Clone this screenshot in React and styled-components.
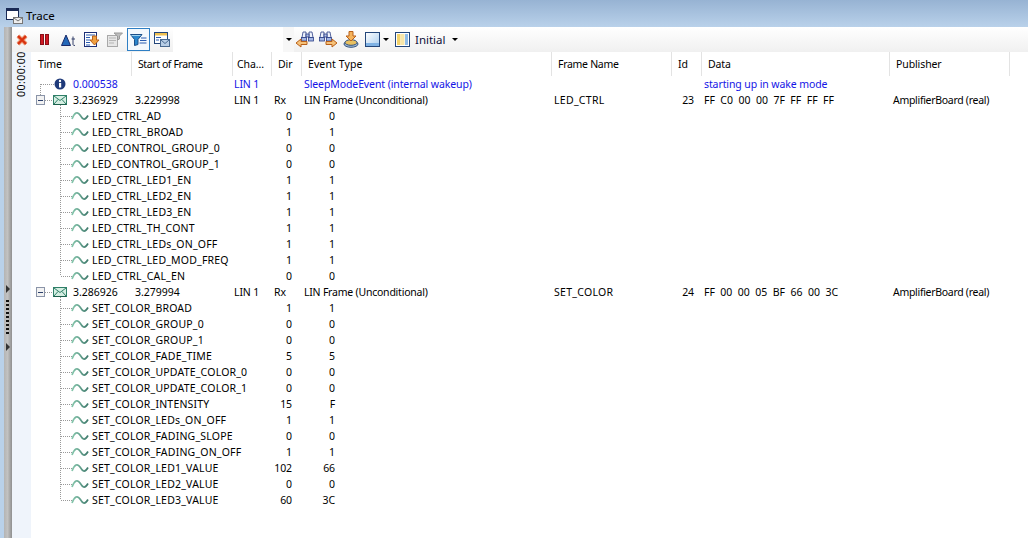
import React from "react";
import styled, { createGlobalStyle } from "styled-components";

const COLUMNS = "100px 101px 39px 30px 250px 120px 30px 188px 120px 1fr";

const GlobalStyle = createGlobalStyle`
    html, body {
        margin: 0;
        height: 100%;
        overflow: hidden;
        background: #fff;
    }
    body {
        font-family: "Noto Sans", "Liberation Sans", sans-serif;
        font-size: 10.5px;
        letter-spacing: -0.1px;
        color: #000;
    }
`;

const Page = styled.div`
    display: flex;
    flex-direction: column;
    width: 1028px;
    height: 538px;
    overflow: hidden;
`;

const TitleBar = styled.div`
    display: flex;
    align-items: center;
    gap: 3px;
    flex: 0 0 27px;
    padding: 3px 0 0 6px;
    box-sizing: border-box;
    background: linear-gradient(#97b3d3, #b9d1ea);
    font-size: 11.5px;
    letter-spacing: 0;
`;

const Body = styled.div`
    display: flex;
    flex: 1;
    min-height: 0;
    background: linear-gradient(90deg, #b9d1ea 0 4px, transparent 4px);
`;

const Splitter = styled.div`
    flex: 0 0 8px;
    margin-left: 4px;
    display: flex;
    flex-direction: column;
    align-items: center;
    padding-top: 258px;
    box-sizing: border-box;
    background: linear-gradient(90deg, #b4b4b4 0, #c2c2c2 45%, #8f8f8f 100%);
`;

const SplitArrow = styled.div`
    width: 0;
    height: 0;
    border-left: 4px solid #333;
    border-top: 4px solid transparent;
    border-bottom: 4px solid transparent;
    margin-left: -1px;
`;

const SplitDots = styled.div`
    width: 3px;
    height: 35px;
    margin: 7px 0 8px -2px;
    background: repeating-linear-gradient(#111 0 2px, transparent 2px 4px);
`;

const Main = styled.div`
    flex: 1;
    display: flex;
    flex-direction: column;
    min-width: 0;
`;

const Toolbar = styled.div`
    display: flex;
    flex: 0 0 25px;
    height: 25px;
    background: linear-gradient(#fff, #f0f0f0);
`;

const ToolGroup = styled.div`
    display: flex;
    align-items: center;
`;

const ToolButton = styled.div`
    display: flex;
    align-items: center;
    justify-content: center;
    box-sizing: border-box;
    width: ${(p) => p.$w || 23}px;
    height: ${(p) => (p.$active ? 23 : 25)}px;
    margin-left: ${(p) => p.$ml || 0}px;
    ${(p) => p.$active && "border: 1px solid #2f7fc4; background: #f4f9fd;"}
`;

const ComboBlank = styled.div`
    flex: 0 0 110px;
    background: #fff;
`;

const ComboArrow = styled.div`
    flex: 0 0 11px;
    display: flex;
    align-items: center;
    justify-content: center;
    background: #f7f7f7;
`;

const Caret = styled.span`
    width: 0;
    height: 0;
    margin-left: ${(p) => p.$ml || 0}px;
    border-top: 3px solid #000;
    border-left: 3px solid transparent;
    border-right: 3px solid transparent;
`;

const ToolLabel = styled.span`
    font-size: 11.5px;
    letter-spacing: 0;
    color: #10103a;
    margin-left: 3px;
`;

const Content = styled.div`
    flex: 1;
    display: flex;
    min-height: 0;
`;

const TimeRuler = styled.div`
    flex: 0 0 19px;
    background: #eff4fb;
    display: flex;
    justify-content: center;
    padding-top: 3px;
`;

const RulerText = styled.span`
    writing-mode: vertical-rl;
    transform: rotate(180deg);
    height: 42px;
    letter-spacing: 0.5px;
    line-height: 19px;
`;

const Table = styled.div`
    flex: 1;
    background: #fff;
    min-width: 0;
`;

const HeaderRow = styled.div`
    display: grid;
    grid-template-columns: ${COLUMNS};
    height: 24px;
`;

const HeaderCell = styled.div`
    box-sizing: border-box;
    padding-left: ${(p) => p.$pl || 6}px;
    padding-top: 4px;
    line-height: 16px;
    white-space: nowrap;
    overflow: hidden;
    letter-spacing: ${(p) => p.$ls ?? -0.1}px;
    &:not(:first-child) {
        border-left: 1px solid #e3e3e3;
    }
`;

const Row = styled.div`
    display: grid;
    grid-template-columns: ${COLUMNS};
    height: 16px;
    line-height: 16px;
    white-space: pre;
    color: ${(p) => (p.$blue ? "#1414e6" : "#000")};
`;

const TreeCell = styled.div`
    display: flex;
    align-items: center;
    letter-spacing: ${(p) => (p.$wide ? "0.2px" : "0")};
    grid-column: ${(p) => (p.$wide ? "1 / 4" : "auto")};
`;

const Gutter = styled.svg`
    flex: none;
    display: block;
`;

const Cell = styled.div`
    padding-left: ${(p) => p.$pl || 3}px;
    white-space: pre;
    overflow: hidden;
    letter-spacing: ${(p) => p.$ls ?? -0.1}px;
`;

const RightCell = styled.div`
    text-align: right;
    padding-right: ${(p) => p.$pr}px;
`;

const ValueCell = styled.div`
    width: 34px;
    text-align: right;
`;

const Dots = ({ d }) => <path d={d} fill="none" stroke="#999" strokeDasharray="1 1" />;

const InfoGutter = () => (
    <Gutter width="42" height="16">
        <Dots d="M9.5 8V16M10 8.5H24" />
        <circle cx="29" cy="8" r="5.5" fill="#1f3a7a" />
        <circle cx="29" cy="5" r="1.2" fill="#fff" />
        <rect x="28" y="7" width="2.2" height="4.5" fill="#fff" />
    </Gutter>
);

const FrameGutter = ({ first }) => (
    <Gutter width="42" height="16">
        {first && <Dots d="M9.5 0V3" />}
        <rect x="5.5" y="3.5" width="8" height="9" fill="#f2f2f2" stroke="#8a94a8" />
        <path d="M7 8.5H12" stroke="#2b3f6b" />
        <Dots d="M14 8.5H21" />
        <rect x="22.5" y="3.5" width="13" height="9" fill="#d5eee2" stroke="#2f7f68" />
        <path d="M23 4L29 8.5 35 4M23 12L27 7.5M35 12L31 7.5" fill="none" stroke="#2f7f68" />
        <path d="M22.5 12.5H35.5" stroke="#1d5f4c" />
        <Dots d="M29.5 13V16" />
    </Gutter>
);

const SignalGutter = ({ last }) => (
    <Gutter width="61" height="16">
        <defs>
            <linearGradient id="waveStroke" gradientUnits="userSpaceOnUse" x1="41" y1="0" x2="57" y2="0">
                <stop offset="0" stopColor="#86c7ad" />
                <stop offset="1" stopColor="#3f7a6c" />
            </linearGradient>
        </defs>
        <Dots d={last ? "M29.5 0V8M30 8.5H41" : "M29.5 0V16M30 8.5H41"} />
        <path d="M41 11C43.5 4.5 46.5 3 49 7S53.5 13.5 57 7.5" fill="none" stroke="url(#waveStroke)" strokeWidth="1.7" />
    </Gutter>
);

const TitleIcon = () => (
    <svg width="17" height="17" viewBox="0 0 17 17">
        <rect x="0.5" y="1.5" width="12" height="11" fill="#fff" stroke="#1a2a55" />
        <rect x="0.5" y="1.5" width="12" height="2.5" fill="#1a2a55" />
        <rect x="7.5" y="10.5" width="9" height="6" fill="#eee" stroke="#777" />
        <path d="M8 11L12 14 16 11" fill="none" stroke="#777" />
    </svg>
);

const CloseIcon = () => (
    <svg width="12" height="12" viewBox="0 0 12 12">
        <path d="M2 2L10 10M10 2L2 10" stroke="#eb8f6a" strokeWidth="4" />
        <path d="M2 2L10 10M10 2L2 10" stroke="#d8300e" strokeWidth="2" />
    </svg>
);

const PauseIcon = () => (
    <svg width="9" height="11" viewBox="0 0 9 11">
        <rect x="0.5" y="0.5" width="3" height="10" fill="#d01a24" stroke="#8a1018" />
        <rect x="5.5" y="0.5" width="3" height="10" fill="#d01a24" stroke="#8a1018" />
    </svg>
);

const DeltaIcon = () => (
    <svg width="15" height="12" viewBox="0 0 15 12">
        <path d="M0.5 11.5L5 1 9.5 11.5Z" fill="#2468b8" stroke="#1a2a6a" />
        <path d="M12 2.5V10.5Q12 11.5 14 11.5M10.5 5H14" fill="none" stroke="#35406a" />
    </svg>
);

const ExportIcon = () => (
    <svg width="16" height="15" viewBox="0 0 16 15">
        <rect x="0.5" y="0.5" width="12" height="14" fill="#fff" stroke="#1c2f78" />
        <path d="M2 3H11M2 5.5H6M2 8H6M2 10.5H6M2 13H6" stroke="#2a5cb0" />
        <path d="M8.5 4H12.5V8H15L10.5 13 6 8H8.5Z" fill="#f0a040" stroke="#b8601a" />
    </svg>
);

const GreyIcon = () => (
    <svg width="16" height="15" viewBox="0 0 16 15">
        <rect x="0.5" y="3.5" width="10" height="11" fill="#e6e6e6" stroke="#a8a8a8" />
        <path d="M2 6H9M2 8.5H9M2 11H7" stroke="#b5b5b5" />
        <path d="M7 1H15.5L12.5 4V7L10.5 8V4Z" fill="#bdbdbd" stroke="#999" />
    </svg>
);

const FilterIcon = () => (
    <svg width="17" height="12" viewBox="0 0 17 12">
        <path d="M0.5 0.5H12L8 5.5V10.5L4.5 11.5V5.5Z" fill="#2a86cc" stroke="#1c4f88" />
        <path d="M1.5 1.5H10.5" stroke="#9fd3f0" />
        <path d="M11 4H16.5M10 6.5H16.5M9.5 9H16.5" stroke="#2a5cb0" />
    </svg>
);

const WindowMailIcon = () => (
    <svg width="16" height="15" viewBox="0 0 16 15">
        <rect x="0.5" y="0.5" width="13" height="11" fill="#fff" stroke="#23467a" />
        <rect x="1" y="1" width="12" height="2.5" fill="#f0c050" />
        <path d="M2 5.5H7M2 8H5" stroke="#2a5cb0" />
        <rect x="6.5" y="7.5" width="9" height="7" fill="#b8cee6" stroke="#4a6a90" />
        <path d="M7 8L11 11.5 15 8" fill="none" stroke="#4a6a90" />
    </svg>
);

const FindIcon = ({ back }) => (
    <svg width="20" height="17" viewBox="0 0 20 17">
        <g transform={back ? "translate(6 0)" : "translate(1 0)"} stroke="#2c3f86" strokeWidth="0.8">
            <path d="M1 6.5L2 1H5V6.5Z" fill="#eef2fb" />
            <path d="M8 6.5V1H11L12 6.5Z" fill="#eef2fb" />
            <rect x="5" y="3" width="3" height="3" fill="#aebde6" />
            <rect x="0.5" y="6.5" width="5" height="3.5" fill="#a3b6e4" />
            <rect x="7.5" y="6.5" width="5" height="3.5" fill="#a3b6e4" />
        </g>
        <path
            d={back ? "M1 12L6 8V10.5H12V13.5H6V16Z" : "M19 12L14 8V10.5H8V13.5H14V16Z"}
            fill="#f6c27a"
            stroke="#b8601a"
        />
    </svg>
);

const SaveIcon = () => (
    <svg width="16" height="17" viewBox="0 0 16 17">
        <ellipse cx="8" cy="13" rx="7" ry="3.3" fill="#9db9d8" stroke="#33527c" />
        <ellipse cx="8" cy="11.5" rx="6" ry="2.8" fill="#e8c060" stroke="#33527c" />
        <path d="M6 0.5H10V5H13L8 10 3 5H6Z" fill="#f6b45c" stroke="#b8601a" />
    </svg>
);

const LayoutIcon = () => (
    <svg width="15" height="15" viewBox="0 0 15 15">
        <defs>
            <linearGradient id="layoutFill" x1="0" y1="0" x2="1" y2="1">
                <stop offset="0" stopColor="#fff" />
                <stop offset="1" stopColor="#a9cdee" />
            </linearGradient>
        </defs>
        <rect x="0.5" y="0.5" width="14" height="14" fill="url(#layoutFill)" stroke="#23467a" />
        <rect x="1" y="11" width="13" height="3" fill="#7fb2e4" />
    </svg>
);

const ColumnsIcon = () => (
    <svg width="15" height="15" viewBox="0 0 15 15">
        <rect x="0.5" y="0.5" width="14" height="14" fill="#fff" stroke="#23467a" />
        <rect x="2" y="2" width="3.5" height="11" fill="#f3d36b" />
        <rect x="6" y="2" width="3.5" height="11" fill="#f8e6a8" />
        <rect x="10" y="2" width="3" height="11" fill="#8dbbe8" />
    </svg>
);

const signals1 = [
    ["LED_CTRL_AD", "0", "0"],
    ["LED_CTRL_BROAD", "1", "1"],
    ["LED_CONTROL_GROUP_0", "0", "0"],
    ["LED_CONTROL_GROUP_1", "0", "0"],
    ["LED_CTRL_LED1_EN", "1", "1"],
    ["LED_CTRL_LED2_EN", "1", "1"],
    ["LED_CTRL_LED3_EN", "1", "1"],
    ["LED_CTRL_TH_CONT", "1", "1"],
    ["LED_CTRL_LEDs_ON_OFF", "1", "1"],
    ["LED_CTRL_LED_MOD_FREQ", "1", "1"],
    ["LED_CTRL_CAL_EN", "0", "0"],
];

const signals2 = [
    ["SET_COLOR_BROAD", "1", "1"],
    ["SET_COLOR_GROUP_0", "0", "0"],
    ["SET_COLOR_GROUP_1", "0", "0"],
    ["SET_COLOR_FADE_TIME", "5", "5"],
    ["SET_COLOR_UPDATE_COLOR_0", "0", "0"],
    ["SET_COLOR_UPDATE_COLOR_1", "0", "0"],
    ["SET_COLOR_INTENSITY", "15", "F"],
    ["SET_COLOR_LEDs_ON_OFF", "1", "1"],
    ["SET_COLOR_FADING_SLOPE", "0", "0"],
    ["SET_COLOR_FADING_ON_OFF", "1", "1"],
    ["SET_COLOR_LED1_VALUE", "102", "66"],
    ["SET_COLOR_LED2_VALUE", "0", "0"],
    ["SET_COLOR_LED3_VALUE", "60", "3C"],
];

const headers = [
    ["Time", 7],
    ["Start of Frame", 6, -0.4],
    ["Cha...", 4],
    ["Dir", 6],
    ["Event Type", 6, 0.1],
    ["Frame Name", 6, -0.3],
    ["Id", 6],
    ["Data", 6],
    ["Publisher", 6],
];

function FrameRow({ first, time, start, name, id, data }) {
    return (
        <Row>
            <TreeCell>
                <FrameGutter first={first} />
                {time}
            </TreeCell>
            <Cell $pl={4} $ls={0}>{start}</Cell>
            <Cell $pl={2}>LIN 1</Cell>
            <Cell>Rx</Cell>
            <Cell $ls={-0.22}>LIN Frame (Unconditional)</Cell>
            <Cell $ls={0.3}>{name}</Cell>
            <RightCell $pr={7}>{id}</RightCell>
            <Cell $ls={0}>{data}</Cell>
            <Cell $pl={4} $ls={-0.3}>AmplifierBoard (real)</Cell>
        </Row>
    );
}

function SignalRows({ items }) {
    return items.map(([name, raw, value], i) => (
        <Row key={name}>
            <TreeCell $wide>
                <SignalGutter last={i === items.length - 1} />
                {name}
            </TreeCell>
            <RightCell $pr={9}>{raw}</RightCell>
            <ValueCell>{value}</ValueCell>
        </Row>
    ));
}

export default function App() {
    return (
        <Page>
            <GlobalStyle />
            <TitleBar>
                <TitleIcon />
                Trace
            </TitleBar>
            <Body>
                <Splitter>
                    <SplitArrow />
                    <SplitDots />
                    <SplitArrow />
                </Splitter>
                <Main>
                    <Toolbar>
                        <ToolGroup>
                            <ToolButton $w={20}><CloseIcon /></ToolButton>
                            <ToolButton $w={25}><PauseIcon /></ToolButton>
                            <ToolButton><DeltaIcon /></ToolButton>
                            <ToolButton><ExportIcon /></ToolButton>
                            <ToolButton><GreyIcon /></ToolButton>
                            <ToolButton $active $ml={1}><FilterIcon /></ToolButton>
                            <ToolButton><WindowMailIcon /></ToolButton>
                        </ToolGroup>
                        <ComboBlank />
                        <ComboArrow><Caret /></ComboArrow>
                        <ToolGroup>
                            <ToolButton $w={22}><FindIcon back /></ToolButton>
                            <ToolButton $w={24}><FindIcon /></ToolButton>
                            <ToolButton $w={22}><SaveIcon /></ToolButton>
                            <ToolButton $w={20}><LayoutIcon /></ToolButton>
                            <Caret $ml={1} />
                            <ToolButton $w={20} $ml={3}><ColumnsIcon /></ToolButton>
                            <ToolLabel>Initial</ToolLabel>
                            <Caret $ml={6} />
                        </ToolGroup>
                    </Toolbar>
                    <Content>
                        <TimeRuler>
                            <RulerText>00:00:00</RulerText>
                        </TimeRuler>
                        <Table>
                            <HeaderRow>
                                {headers.map(([label, pad, ls]) => (
                                    <HeaderCell key={label} $pl={pad} $ls={ls}>{label}</HeaderCell>
                                ))}
                                <HeaderCell />
                            </HeaderRow>
                            <Row $blue>
                                <TreeCell>
                                    <InfoGutter />
                                    0.000538
                                </TreeCell>
                                <Cell />
                                <Cell $pl={2}>LIN 1</Cell>
                                <Cell />
                                <Cell>SleepModeEvent (internal wakeup)</Cell>
                                <Cell />
                                <Cell />
                                <Cell>starting up in wake mode</Cell>
                            </Row>
                            <FrameRow
                                first
                                time="3.236929"
                                start="3.229998"
                                name="LED_CTRL"
                                id="23"
                                data="FF  C0  00  00  7F  FF  FF  FF"
                            />
                            <SignalRows items={signals1} />
                            <FrameRow
                                time="3.286926"
                                start="3.279994"
                                name="SET_COLOR"
                                id="24"
                                data="FF  00  00  05  BF  66  00  3C"
                            />
                            <SignalRows items={signals2} />
                        </Table>
                    </Content>
                </Main>
            </Body>
        </Page>
    );
}
